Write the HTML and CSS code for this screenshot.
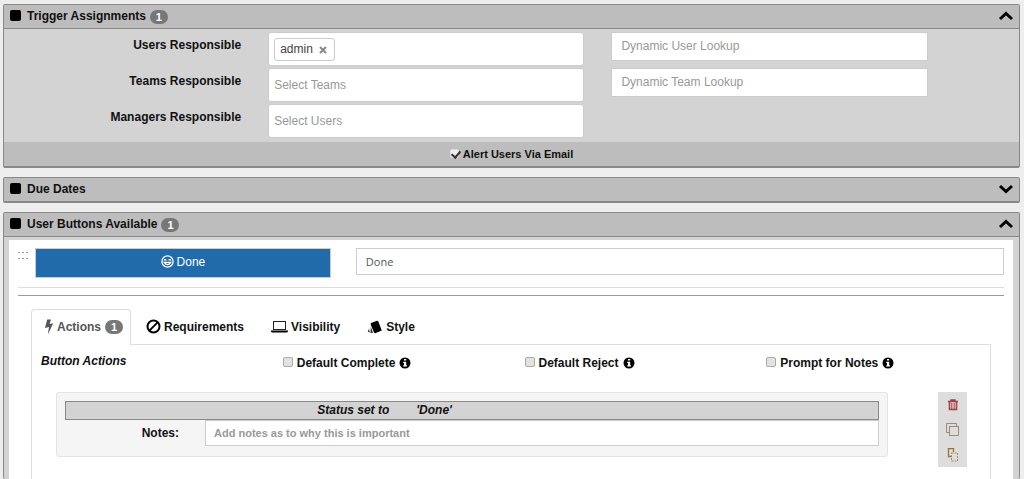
FILE: index.html
```html
<!DOCTYPE html>
<html lang="en">

<head>
  <meta charset="UTF-8">
  <meta name="viewport" content="width=device-width, initial-scale=1.0">
  <title>Trigger Setup</title>
  <link rel="stylesheet" href="styles.css">
</head>

<body>

  <section class="panel">
    <header class="panel-header">
      <span class="square"></span>
      <h2>Trigger Assignments</h2>
      <span class="badge">1</span>
      <button type="button" class="toggle" aria-label="Collapse">
        <svg width="16" height="10" viewBox="0 0 16 10"><path d="M2 8 L8 2.5 L14 8" /></svg>
      </button>
    </header>

    <div class="assignments">
      <label for="users">Users Responsible</label>
      <div class="select-box">
        <span class="tag">admin <button type="button" aria-label="Remove">
          <svg width="8" height="8" viewBox="0 0 8 8"><path d="M1 1 L7 7 M7 1 L1 7" /></svg>
        </button></span>
        <input type="text" id="users">
      </div>
      <input type="text" class="lookup" placeholder="Dynamic User Lookup" aria-label="Dynamic User Lookup">

      <label for="teams">Teams Responsible</label>
      <div class="select-box">
        <input type="text" id="teams" placeholder="Select Teams">
      </div>
      <input type="text" class="lookup" placeholder="Dynamic Team Lookup" aria-label="Dynamic Team Lookup">

      <label for="managers">Managers Responsible</label>
      <div class="select-box">
        <input type="text" id="managers" placeholder="Select Users">
      </div>
    </div>

    <footer class="panel-footer">
      <input type="checkbox" id="alertEmail" class="check check-small" checked>
      <label for="alertEmail">Alert Users Via Email</label>
    </footer>
  </section>

  <section class="panel">
    <header class="panel-header">
      <span class="square"></span>
      <h2>Due Dates</h2>
      <button type="button" class="toggle" aria-label="Expand">
        <svg width="16" height="10" viewBox="0 0 16 10"><path d="M2 2 L8 7.5 L14 2" /></svg>
      </button>
    </header>
  </section>

  <section class="panel panel-last">
    <header class="panel-header">
      <span class="square"></span>
      <h2>User Buttons Available</h2>
      <span class="badge">1</span>
      <button type="button" class="toggle" aria-label="Collapse">
        <svg width="16" height="10" viewBox="0 0 16 10"><path d="M2 8 L8 2.5 L14 8" /></svg>
      </button>
    </header>

    <div class="buttons-body">
      <div class="button-row">
        <svg class="grip" width="10" height="9" viewBox="0 0 10 9">
          <path d="M0 1.5 H10 M0 7.5 H10" />
        </svg>
        <button type="button" class="btn-done">
          <svg width="13" height="13" viewBox="0 0 13 13">
            <circle cx="6.5" cy="6.5" r="5.6" />
            <path d="M3 5.3 Q4.2 3.9 5.4 5.3 M7.6 5.3 Q8.8 3.9 10 5.3 M3.2 7.3 Q6.5 11.8 9.8 7.3 Z" />
          </svg>
          Done
        </button>
        <input type="text" class="button-name" value="Done" aria-label="Button name">
      </div>

      <hr class="line-light">
      <hr class="line-dark">

      <nav class="tabs">
        <a href="#actions" class="tab active">
          <svg width="10" height="16" viewBox="0 0 10 16"><path d="M3.2 0.5 H7 L5.6 5 L9.3 4.2 L3.8 15.5 L5 8 L1 9 Z" fill="#555" /></svg>
          Actions
          <span class="badge">1</span>
        </a>
        <a href="#requirements" class="tab">
          <svg width="15" height="15" viewBox="0 0 15 15"><g fill="none" stroke="#000" stroke-width="2"><circle cx="7.5" cy="7.5" r="6" /><path d="M11.6 3.4 L3.4 11.6" /></g></svg>
          Requirements
        </a>
        <a href="#visibility" class="tab">
          <svg width="17" height="13" viewBox="0 0 17 13"><rect x="2.5" y="1.5" width="12" height="8" fill="#fff" stroke="#222" /><path d="M0 10.5 H17 V11.5 Q16.5 12.5 15.5 12.5 H1.5 Q0.5 12.5 0 11.5 Z" /></svg>
          Visibility
        </a>
        <a href="#style" class="tab">
          <svg width="16" height="14" viewBox="0 0 16 14"><path d="M4 3 L10 0.8 Q11 0.6 11.3 1.5 L14.8 10.5 L8.2 13.3 Q7.4 13.4 7 12.5 L3.6 4.2 Z" /><path d="M3.8 6.5 L6 13 H3.5 Z M2 8.5 L2.8 12.5 L0.8 11.8 Z" fill="#333" /></svg>
          Style
        </a>
      </nav>

      <div class="tab-content" id="actions">
        <div class="options">
          <h3>Button Actions</h3>
          <div class="option">
            <input type="checkbox" id="defaultComplete" class="check">
            <label for="defaultComplete">Default Complete</label>
            <svg width="12" height="12" viewBox="0 0 12 12"><circle cx="6" cy="6" r="5.5" /><path d="M5 2 H7.2 V3.6 H5 Z M4.2 4.8 H7.2 V8.3 H8 V9.6 H4.2 V8.3 H5 V6 H4.2 Z" fill="#fff" /></svg>
          </div>
          <div class="option">
            <input type="checkbox" id="defaultReject" class="check">
            <label for="defaultReject">Default Reject</label>
            <svg width="12" height="12" viewBox="0 0 12 12"><circle cx="6" cy="6" r="5.5" /><path d="M5 2 H7.2 V3.6 H5 Z M4.2 4.8 H7.2 V8.3 H8 V9.6 H4.2 V8.3 H5 V6 H4.2 Z" fill="#fff" /></svg>
          </div>
          <div class="option">
            <input type="checkbox" id="promptNotes" class="check">
            <label for="promptNotes">Prompt for Notes</label>
            <svg width="12" height="12" viewBox="0 0 12 12"><circle cx="6" cy="6" r="5.5" /><path d="M5 2 H7.2 V3.6 H5 Z M4.2 4.8 H7.2 V8.3 H8 V9.6 H4.2 V8.3 H5 V6 H4.2 Z" fill="#fff" /></svg>
          </div>
        </div>

        <div class="action">
          <div class="well">
            <div class="status">
              <span class="status-label">Status set to</span>
              <span>'Done'</span>
            </div>
            <div class="notes">
              <label for="notes">Notes:</label>
              <input type="text" id="notes" placeholder="Add notes as to why this is important">
            </div>
          </div>

          <div class="tools">
            <button type="button" aria-label="Delete">
              <svg width="12" height="12" viewBox="0 0 12 12"><g fill="none" stroke="#b03a44"><path d="M1 2.5 H11 M4 2 V1 H8 V2" stroke-width="1.4" /><path d="M2.5 3 V10.5 H9.5 V3" stroke-width="1.6" /><path d="M4.8 4 V10 M7.2 4 V10" /></g></svg>
            </button>
            <button type="button" aria-label="Copy">
              <svg width="14" height="14" viewBox="0 0 14 14"><g fill="none" stroke="#a08a74"><path d="M3.5 9.5 H0.5 V0.5 H10.5 V3" /><rect x="3.5" y="3.5" width="9" height="9" /></g></svg>
            </button>
            <button type="button" aria-label="Duplicate">
              <svg width="12" height="14" viewBox="0 0 12 14"><g fill="none" stroke="#94743c"><path d="M4 8.5 H1.5 V0.5 H6.5 V4" stroke-width="1.3" /><rect x="4.5" y="5" width="6" height="8" stroke="#a08c70" stroke-dasharray="2 1" /></g></svg>
            </button>
          </div>
        </div>
      </div>
    </div>
  </section>

</body>

</html>
```
FILE: styles.css
```css
* {
  box-sizing: border-box;
}

body {
  font-family: "Liberation Sans", Arial, sans-serif;
  font-size: 12px;
  line-height: 18px;
  color: #111;
  background-color: #eee;
  margin: 0;
  padding: 4px 4px 0 3px;
  min-height: 100vh;
  display: flex;
  flex-direction: column;
  gap: 9px;
}

h2,
h3 {
  font-size: 12px;
  margin: 0;
}

button,
input {
  font-family: inherit;
  font-size: 12px;
  margin: 0;
}

label {
  font-weight: bold;
}

input::placeholder {
  color: #999;
  opacity: 1;
}

/* Panels */
.panel {
  background-color: #d3d3d3;
  border: 1px solid #888;
  border-bottom-width: 2px;
  border-radius: 2px;
}

.panel-last {
  flex: 1;
  display: flex;
  flex-direction: column;
  border-bottom: none;
}

.panel-header {
  display: flex;
  align-items: center;
  height: 23px;
  padding: 0 5px 2px 6px;
  background-color: #bdbdbd;
}

.panel-header:not(:last-child) {
  height: 24px;
  border-bottom: 1px solid #888;
}

.square {
  width: 11px;
  height: 11px;
  margin-right: 6px;
  border-radius: 2px;
  background-color: #000;
}

.badge {
  min-width: 18px;
  height: 14px;
  margin-left: 4px;
  border-radius: 8px;
  background-color: #777;
  color: #fff;
  font-size: 11px;
  font-weight: bold;
  line-height: 15px;
  text-align: center;
}

.panel-header .badge {
  margin-top: 2px;
}

.toggle {
  display: flex;
  margin-left: auto;
  padding: 0;
  border: none;
  background: none;
  cursor: pointer;
}

.toggle path {
  fill: none;
  stroke: #000;
  stroke-width: 3;
}

/* Assignments */
.assignments {
  display: grid;
  grid-template-columns: 3fr 4fr 4fr;
  align-items: start;
  gap: 2px 27px;
  padding: 3px 9% 4px 0;
}

.assignments > label {
  padding-top: 4px;
  text-align: right;
}

.select-box {
  display: flex;
  align-items: center;
  height: 34px;
  padding: 0 5px;
  background-color: #fff;
  border: 1px solid #ccc;
  border-radius: 3px;
}

.select-box input {
  flex: 1;
  min-width: 0;
  padding: 0;
  border: none;
  outline: none;
  background: none;
}

.tag {
  display: flex;
  align-items: center;
  gap: 6px;
  height: 23px;
  padding: 0 7px 0 5px;
  border: 1px solid #ccc;
  border-radius: 3px;
  color: #444;
}

.tag button {
  display: flex;
  padding: 2px 0 0;
  border: none;
  background: none;
}

.tag path {
  stroke: #888;
  stroke-width: 2;
}

.lookup {
  width: 100%;
  height: 29px;
  padding: 0 9px 2px;
  border: 1px solid #ccc;
}

.panel-footer {
  display: flex;
  align-items: center;
  justify-content: center;
  gap: 4px;
  height: 24px;
  background-color: #bdbdbd;
  font-size: 11px;
}

/* Checkboxes */
.check {
  appearance: none;
  width: 10px;
  height: 10px;
  border: 1px solid #aaa;
  border-radius: 2px;
  background-color: #e2e2e2;
}

.check-small {
  width: 9px;
  height: 9px;
  margin-bottom: 2px;
  border-color: #ddd;
  background-color: #eee;
}

.check:checked::before {
  content: "";
  display: block;
  width: 4px;
  height: 7px;
  margin: -1px 0 0 2px;
  border: solid #333;
  border-width: 0 2px 2px 0;
  transform: rotate(40deg);
}

/* User buttons */
.buttons-body {
  flex: 1;
  display: flex;
  flex-direction: column;
  margin: 3px 6px 0 5px;
  padding: 8px 9px 0;
  background-color: #fff;
}

.button-row {
  display: flex;
  align-items: flex-start;
}

.grip {
  flex: none;
  margin: 3px 7px 0 0;
  fill: none;
  stroke: #999;
  stroke-dasharray: 2 2;
}

.btn-done {
  width: 30%;
  display: flex;
  align-items: center;
  justify-content: center;
  gap: 3px;
  height: 30px;
  padding: 0 0 3px;
  border: 1px solid #ccc;
  background-color: #226bab;
  color: #fff;
}

.btn-done svg {
  fill: none;
  stroke: #fff;
  stroke-width: 1.3;
}

.button-name {
  flex: 1;
  min-width: 0;
  height: 27px;
  margin-left: 25px;
  padding: 0 9px;
  border: 1px solid #ccc;
  color: #555;
  font-family: "Open Sans", sans-serif;
  font-size: 11px;
}

hr {
  height: 0;
  margin: 0;
  border: none;
}

.line-light {
  margin-top: 9px;
  border-top: 1px solid #ddd;
}

.line-dark {
  margin-top: 7px;
  border-top: 1px solid #999;
}

/* Tabs */
.tabs {
  display: flex;
  margin: 13px 13px 0;
}

.tab {
  display: flex;
  align-items: center;
  gap: 3px;
  height: 35px;
  padding: 0 11px 1px;
  margin-right: 3px;
  border: 1px solid transparent;
  border-bottom: none;
  color: #111;
  font-weight: bold;
  text-decoration: none;
}

.tab.active {
  height: 36px;
  margin-bottom: -1px;
  padding: 0 7px 1px 12px;
  border-color: #ddd;
  border-radius: 4px 4px 0 0;
  background-color: #fff;
  color: #555;
  z-index: 1;
}

.tab .badge {
  margin-left: 1px;
}

.tab-content {
  flex: 1;
  margin: 0 13px;
  padding-left: 9px;
  border: 1px solid #ddd;
  border-bottom: none;
}

.options {
  display: grid;
  grid-template-columns: repeat(4, 1fr);
  gap: 18px;
  padding-top: 7px;
}

.options h3 {
  font-style: italic;
}

.option {
  display: flex;
  align-items: center;
  gap: 4px;
  padding-top: 2px;
}

.option .check {
  margin-bottom: 2px;
}

/* Action */
.action {
  display: flex;
  align-items: flex-start;
  justify-content: space-between;
  gap: 50px;
  margin: 20px 23px 0 15px;
}

.well {
  flex: 1;
  height: 65px;
  padding: 8px;
  border: 1px solid #e3e3e3;
  border-radius: 3px;
  background-color: #f5f5f5;
}

.status {
  display: grid;
  grid-template-columns: 7fr 10fr;
  gap: 27px;
  height: 19px;
  border: 1px solid #888;
  background-color: #d3d3d3;
  font-style: italic;
  font-weight: bold;
  line-height: 16px;
}

.status-label {
  text-align: right;
}

.notes {
  display: grid;
  grid-template-columns: 114px 1fr;
  gap: 26px;
  align-items: center;
}

.notes label {
  text-align: right;
}

.notes input {
  min-width: 0;
  height: 26px;
  padding: 0 8px;
  border: 1px solid #ccc;
  font-size: 11px;
  font-weight: bold;
}

.tools {
  display: flex;
  flex-direction: column;
  width: 29px;
  background-color: #ddd;
}

.tools button {
  display: flex;
  align-items: center;
  justify-content: center;
  height: 25px;
  padding: 0;
  border: none;
  background: none;
}
```
